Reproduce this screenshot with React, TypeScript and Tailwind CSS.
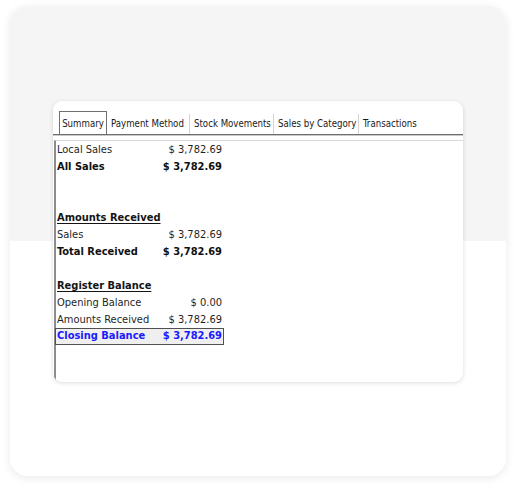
const font = { fontFamily: '"DejaVu Sans Condensed", "Liberation Sans", sans-serif' };

type Row = { label?: string; value?: string; kind?: "normal" | "bold" | "heading" | "total" | "blank" };

const rows: Row[] = [
  { label: "Local Sales", value: "$ 3,782.69" },
  { label: "All Sales", value: "$ 3,782.69", kind: "bold" },
  { kind: "blank" },
  { kind: "blank" },
  { label: "Amounts Received", kind: "heading" },
  { label: "Sales", value: "$ 3,782.69" },
  { label: "Total Received", value: "$ 3,782.69", kind: "bold" },
  { kind: "blank" },
  { label: "Register Balance", kind: "heading" },
  { label: "Opening Balance", value: "$ 0.00" },
  { label: "Amounts Received", value: "$ 3,782.69" },
  { label: "Closing Balance", value: "$ 3,782.69", kind: "total" },
];

const tabs = [
  { name: "Payment Method", w: "w-[83px]" },
  { name: "Stock Movements", w: "w-[84px]" },
  { name: "Sales by Category", w: "w-[85px]" },
  { name: "Transactions", w: "w-[70px]" },
];

export default function App() {
  return (
    <div className="w-[516px] h-[490px] bg-white pt-[6px] pl-[10px]" style={font}>
      <div className="w-[496px] h-[470px] rounded-[18px] overflow-hidden shadow-[0_2px_10px_rgba(0,0,0,0.09)] bg-[linear-gradient(to_bottom,#f5f5f5_235px,#ffffff_235px)] pt-[95px] pl-[43px]">
        <div className="w-[410px] h-[281px] rounded-[9px] overflow-hidden bg-white shadow-[0_1px_4px_rgba(0,0,0,0.14)] flex flex-col pt-[10px]">
          {/* tab strip */}
          <div className="flex items-end h-[24px] border-b border-[#6e6e6e] pl-[6px] text-[9.6px] text-[#1a1a1a]">
            <div className="w-[48px] h-[23px] border-l border-t border-r border-[#707070] bg-white flex items-center justify-center pt-[3px]">
              Summary
            </div>
            {tabs.map((t) => (
              <div
                key={t.name}
                className={`${t.w} h-[20px] border-r border-[#d4d4d4] last:border-r-0 flex items-center pl-[4px] whitespace-nowrap overflow-hidden pt-[1px]`}
              >
                {t.name}
              </div>
            ))}
          </div>
          <div className="h-px bg-[#c9c9c9]" />
          <div className="h-[4px]" />
          {/* content panel */}
          <div className="flex-1 ml-px border-t border-l-2 border-t-[#d9d9d9] border-l-[#8c8c8c] text-[11px] text-[#1f1f1f]">
            {rows.map((r, i) => {
              if (r.kind === "blank") return <div key={i} className="h-[17px]" />;
              if (r.kind === "heading")
                return (
                  <div key={i} className="h-[17px] leading-[17px] pl-px font-bold underline underline-offset-2 text-[#141414]">
                    {r.label}
                  </div>
                );
              if (r.kind === "total")
                return (
                  <div
                    key={i}
                    className="-ml-px w-[169px] h-[17px] border border-[#505050] bg-[#efefef] flex items-center justify-between pl-px pr-px font-bold text-[#1a1aff]"
                  >
                    <span>{r.label}</span>
                    <span>{r.value}</span>
                  </div>
                );
              return (
                <div
                  key={i}
                  className={`w-[166px] h-[17px] leading-[17px] pl-px flex justify-between ${r.kind === "bold" ? "font-bold text-[#111]" : ""}`}
                >
                  <span>{r.label}</span>
                  <span>{r.value}</span>
                </div>
              );
            })}
          </div>
        </div>
      </div>
    </div>
  );
}
